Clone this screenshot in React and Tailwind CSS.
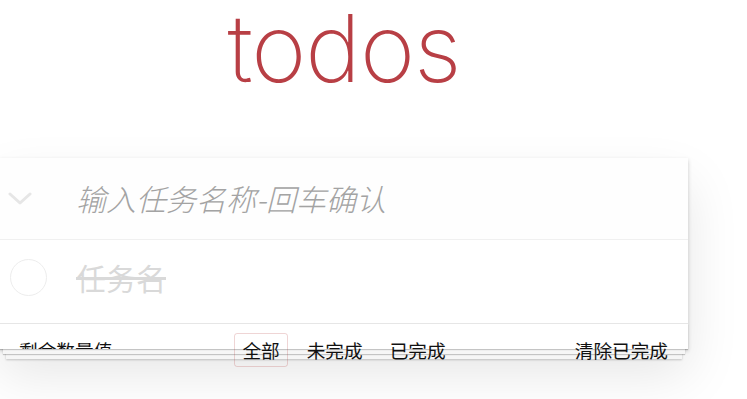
const CJK = "font-['Noto_Sans_CJK_SC',sans-serif]";

const filters = [
  { label: "全部", active: true },
  { label: "未完成", active: false },
  { label: "已完成", active: false },
];

function Chevron() {
  return (
    <svg width="24" height="16" viewBox="0 0 24 16" className="text-[#e6e6e6]">
      <polyline
        points="2,3 12,12 22,3"
        fill="none"
        stroke="currentColor"
        strokeWidth="3"
        strokeLinecap="round"
        strokeLinejoin="round"
      />
    </svg>
  );
}

export default function App() {
  return (
    <div className="h-[399px] w-[747px] overflow-hidden bg-white">
      <section className="w-[688px]">
        <div className="h-[158px]">
          <h1 className="h-[110px] pt-[0px] text-center font-['Inter',sans-serif] text-[94px] font-extralight leading-[96px] tracking-[-1px] text-[#b83f45]">
            todos
          </h1>
        </div>

        <div className="relative bg-white shadow-[0_2px_4px_0_rgba(0,0,0,0.2),0_25px_50px_0_rgba(0,0,0,0.1)]">
          {/* new todo input */}
          <div className="flex h-[82px] items-center border-b border-[#f0f0f0] bg-[rgba(0,0,0,0.003)]">
            <div className="flex w-[40px] justify-center">
              <Chevron />
            </div>
            <input
              placeholder="输入任务名称-回车确认"
              className={`ml-[36px] w-[560px] bg-transparent text-[30px] font-light italic text-[#4d4d4d] outline-none placeholder:text-[#a3a3a3] ${CJK}`}
            />
          </div>

          {/* todo item */}
          <div className="flex h-[84px] items-center border-b border-[#e6e6e6] pb-[8px]">
            <span className="ml-[10px] h-[37px] w-[37px] rounded-full border border-[#ededed]" />
            <span className={`ml-[29px] text-[30px] text-[#d9d9d9] line-through ${CJK}`}>
              任务名
            </span>
          </div>

          {/* footer */}
          <div className={`relative h-[25px] text-[18.67px] leading-[26px] text-[#111] ${CJK}`}>
            <div className="h-full overflow-hidden">
              <span className="block pl-[19px] pt-[13px]">剩余数量值</span>
            </div>
            <div className="absolute inset-0 shadow-[0_1px_1px_rgba(0,0,0,0.2),0_8px_0_-3px_#f6f6f6,0_9px_1px_-3px_rgba(0,0,0,0.2),0_16px_0_-6px_#f6f6f6,0_17px_2px_-6px_rgba(0,0,0,0.2)]" />
            <ul className="absolute left-0 right-0 top-[9px] flex justify-center gap-[11px]">
              {filters.map((f) => (
                <li key={f.label}>
                  <a
                    className={`block rounded-[3px] border px-[7px] py-[3px] ${
                      f.active ? "border-[rgba(175,47,47,0.2)]" : "border-transparent"
                    }`}
                  >
                    {f.label}
                  </a>
                </li>
              ))}
            </ul>
            <button className="absolute right-[20px] top-[13px] leading-[26px]">清除已完成</button>
          </div>
        </div>
      </section>
    </div>
  );
}
